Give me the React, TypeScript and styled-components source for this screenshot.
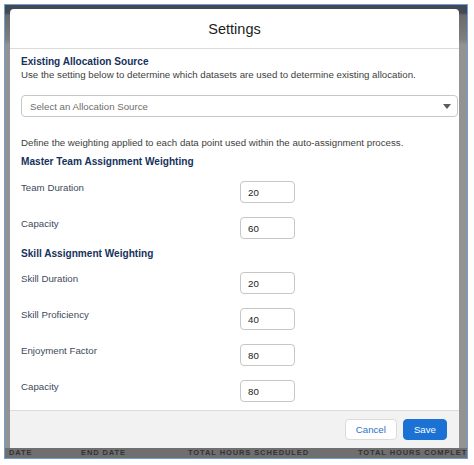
import React from "react";
import styled, { createGlobalStyle } from "styled-components";

const Global = createGlobalStyle`
  html, body { margin: 0; padding: 0; background: #ffffff; }
  body { font-family: "Liberation Sans", Arial, sans-serif; }
  * { box-sizing: border-box; }
`;

const Frame = styled.div`
  margin: 4px 0 0 4px;
  width: 464px;
  height: 455px;
  border: 1px solid #6f9fd8;
  background: linear-gradient(
    to bottom,
    #444a54 0px,
    #444a54 8px,
    #6a6a6a 10px,
    #7e7e7e 34px,
    #939393 40px,
    #939393 100%
  );
  padding: 4px 8px 0 5px;
  display: flex;
  flex-direction: column;
  overflow: hidden;
`;

const Modal = styled.div`
  height: 439px;
  flex: none;
  background: #ffffff;
  border-radius: 4px 4px 0 0;
  display: flex;
  flex-direction: column;
  overflow: hidden;
`;

const Header = styled.div`
  height: 40px;
  flex: none;
  border-bottom: 1px solid #dddbda;
  display: flex;
  align-items: center;
  justify-content: center;
  font-size: 14.5px;
  color: #1c1c1c;
  padding-top: 1px;
`;

const Body = styled.div`
  flex: 1;
  padding: 6px 1px 0 11px;
  display: flex;
  flex-direction: column;
`;

const SectionTitle = styled.div<{ $mt?: number }>`
  font-size: 10.1px;
  font-weight: 700;
  color: #16325c;
  line-height: 13px;
  margin-top: ${(p) => p.$mt ?? 0}px;
`;

const Description = styled.div<{ $mt?: number }>`
  font-size: 9.7px;
  color: #3e3e3c;
  line-height: 13px;
  margin-top: ${(p) => p.$mt ?? 0}px;
`;

const SelectBox = styled.div`
  margin-top: 14px;
  height: 22px;
  border: 1px solid #c9c7c5;
  border-radius: 4px;
  display: flex;
  align-items: center;
  justify-content: space-between;
  padding: 0 6px 0 8px;
  font-size: 9.7px;
  color: #706e6b;
`;

const Caret = styled.span`
  width: 0;
  height: 0;
  border-left: 4px solid transparent;
  border-right: 4px solid transparent;
  border-top: 5px solid #5c5c5c;
`;

const FieldGrid = styled.div<{ $mt: number }>`
  margin-top: ${(p) => p.$mt}px;
  display: grid;
  grid-template-columns: 219px 55px;
  row-gap: 14px;
`;

const Label = styled.div`
  font-size: 9.7px;
  color: #3e4a5c;
  line-height: 13px;
`;

const NumberInput = styled.div`
  height: 22px;
  border: 1px solid #c9c7c5;
  border-radius: 4px;
  display: flex;
  align-items: center;
  padding-left: 7px;
  font-size: 9.7px;
  color: #1c1c1c;
`;

const Footer = styled.div`
  height: 38px;
  flex: none;
  background: #f3f2f2;
  border-top: 1px solid #dddbda;
  display: flex;
  align-items: center;
  justify-content: flex-end;
  gap: 6px;
  padding: 0 12px 0 0;
`;

const Button = styled.div<{ $primary?: boolean }>`
  height: 21px;
  padding: 0 ${(p) => (p.$primary ? 10 : 10)}px;
  border-radius: 4px;
  display: flex;
  align-items: center;
  font-size: 9.7px;
  border: 1px solid ${(p) => (p.$primary ? "#1b72d4" : "#dddbda")};
  background: ${(p) => (p.$primary ? "#1b72d4" : "#ffffff")};
  color: ${(p) => (p.$primary ? "#ffffff" : "#2c72c9")};
`;

const BackdropTableHead = styled.div`
  height: 10px;
  flex: none;
  background: #6f6f6f;
  margin: 0 -8px 0 -5px;
  display: flex;
  align-items: center;
  padding-left: 4px;
  font-size: 7.5px;
  font-weight: 700;
  letter-spacing: 0.9px;
  color: #333333;
  white-space: nowrap;
  overflow: hidden;
  line-height: 10px;
`;

const HeadCell = styled.span<{ $w: number }>`
  display: inline-block;
  width: ${(p) => p.$w}px;
  flex: none;
`;

type Field = { label: string; value: string };

const masterFields: Field[] = [
  { label: "Team Duration", value: "20" },
  { label: "Capacity", value: "60" },
];

const skillFields: Field[] = [
  { label: "Skill Duration", value: "20" },
  { label: "Skill Proficiency", value: "40" },
  { label: "Enjoyment Factor", value: "80" },
  { label: "Capacity", value: "80" },
];

const Fields = ({ fields, mt }: { fields: Field[]; mt: number }) => (
  <FieldGrid $mt={mt}>
    {fields.map((f) => (
      <React.Fragment key={f.label + f.value}>
        <Label>{f.label}</Label>
        <NumberInput>{f.value}</NumberInput>
      </React.Fragment>
    ))}
  </FieldGrid>
);

export default function App() {
  return (
    <>
      <Global />
      <Frame>
        <Modal>
          <Header>Settings</Header>
          <Body>
            <SectionTitle>Existing Allocation Source</SectionTitle>
            <Description>
              Use the setting below to determine which datasets are used to determine existing allocation.
            </Description>
            <SelectBox>
              <span>Select an Allocation Source</span>
              <Caret />
            </SelectBox>
            <Description $mt={19}>
              Define the weighting applied to each data point used within the auto-assignment process.
            </Description>
            <SectionTitle $mt={6}>Master Team Assignment Weighting</SectionTitle>
            <Fields fields={masterFields} mt={13} />
            <SectionTitle $mt={8}>Skill Assignment Weighting</SectionTitle>
            <Fields fields={skillFields} mt={12} />
          </Body>
          <Footer>
            <Button>Cancel</Button>
            <Button $primary>Save</Button>
          </Footer>
        </Modal>
        <BackdropTableHead>
          <HeadCell $w={72}>DATE</HeadCell>
          <HeadCell $w={107}>END DATE</HeadCell>
          <HeadCell $w={170}>TOTAL HOURS SCHEDULED</HeadCell>
          <HeadCell $w={106}>TOTAL HOURS COMPLETE</HeadCell>
        </BackdropTableHead>
      </Frame>
    </>
  );
}
